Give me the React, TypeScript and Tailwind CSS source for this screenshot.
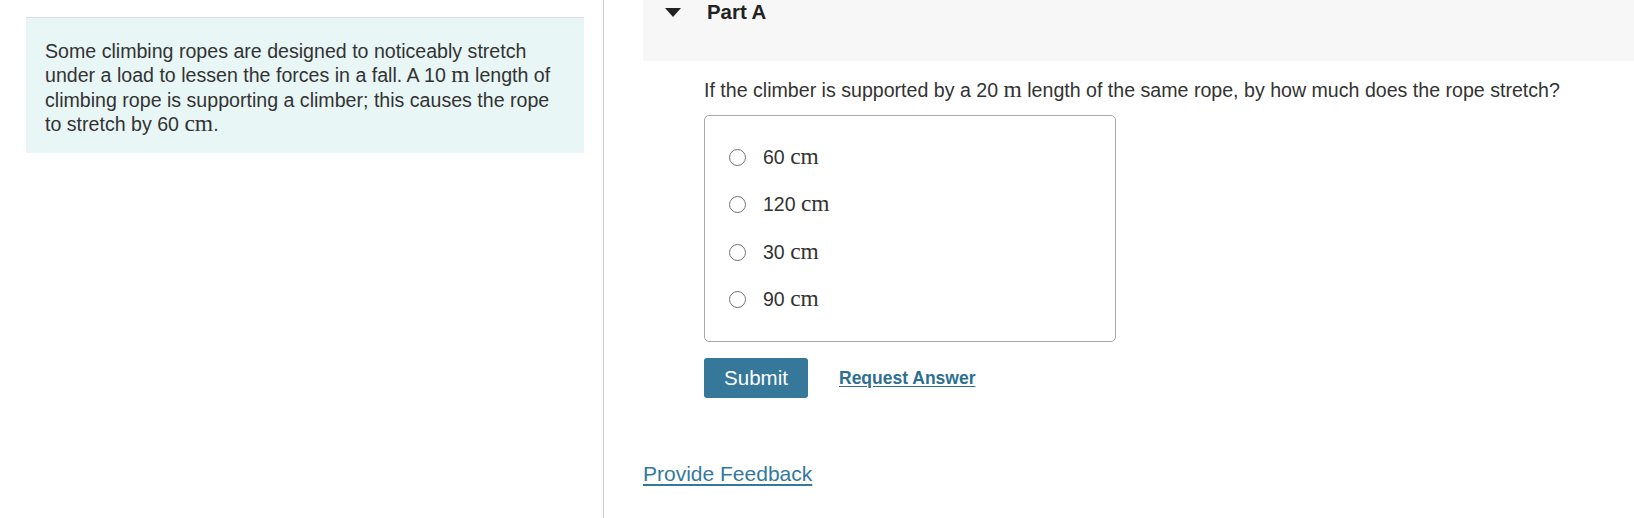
import React from "react";

function M({ children }: { children: React.ReactNode }) {
  return (
    <span className="font-['Liberation_Serif',serif] text-[1.2em] leading-none">{children}</span>
  );
}

function Radio({ value, unit }: { value: string; unit: string }) {
  return (
    <label className="flex h-[47.3px] items-center">
      <span className="ml-[24px] box-border h-[17px] w-[17px] rounded-full border-[1.5px] border-[#737373] bg-white" />
      <span className="ml-[17px] text-[19.5px] text-[#333]">
        {value} <M>{unit}</M>
      </span>
    </label>
  );
}

export default function App() {
  return (
    <div className="flex h-[518px] w-[1634px] overflow-hidden bg-white font-['Liberation_Sans',Arial,sans-serif] text-[#333]">
      {/* Left column */}
      <div className="w-[604px] shrink-0 border-r border-[#c9cdd4]">
        <div className="ml-[26px] mt-[17px] w-[558px] border-t border-[#dcdfe0] bg-[#e8f6f6] pl-[19px] pr-[10px] pt-[21px] pb-[17px]">
          <p className="text-[19.6px] leading-[24.3px] text-[#333]">
            Some climbing ropes are designed to noticeably stretch
            <br />
            under a load to lessen the forces in a fall. A 10 <M>m</M> length of
            <br />
            climbing rope is supporting a climber; this causes the rope
            <br />
            to stretch by 60 <M>cm</M>.
          </p>
        </div>
      </div>

      {/* Right column */}
      <div className="flex min-w-0 flex-1 flex-col pl-[39px]">
        <div className="flex h-[61px] items-start bg-[#f7f7f7]">
          <svg className="ml-[22px] mt-[8px]" width="16" height="9" viewBox="0 0 16 9">
            <polygon points="0,0 16,0 8,9" fill="#222" />
          </svg>
          <span className="ml-[26px] mt-[1px] text-[20.4px] font-bold leading-[23px] text-[#222]">Part A</span>
        </div>

        <div className="ml-[61px]">
          <p className="mt-[17px] text-[19.6px] leading-[23px] text-[#333]">
            If the climber is supported by a 20 <M>m</M> length of the same rope, by how much does the rope stretch?
          </p>

          <div className="mt-[13px] box-border w-[412px] rounded-[5px] border border-[#a9a9a9] pt-[18px] pb-[18px]">
            <Radio value="60" unit="cm" />
            <Radio value="120" unit="cm" />
            <Radio value="30" unit="cm" />
            <Radio value="90" unit="cm" />
          </div>

          <div className="mt-[16px] flex items-center">
            <button className="h-[40px] w-[104px] rounded-[3px] bg-[#35789a] text-[20.5px] text-white">
              Submit
            </button>
            <a className="ml-[31px] cursor-pointer text-[17.5px] font-bold text-[#2d6f91] underline underline-offset-[2px]">
              Request Answer
            </a>
          </div>
        </div>

        <a className="mt-[64px] cursor-pointer self-start text-[21px] leading-[24px] text-[#33799e] underline underline-offset-[3px]">
          Provide Feedback
        </a>
      </div>
    </div>
  );
}
